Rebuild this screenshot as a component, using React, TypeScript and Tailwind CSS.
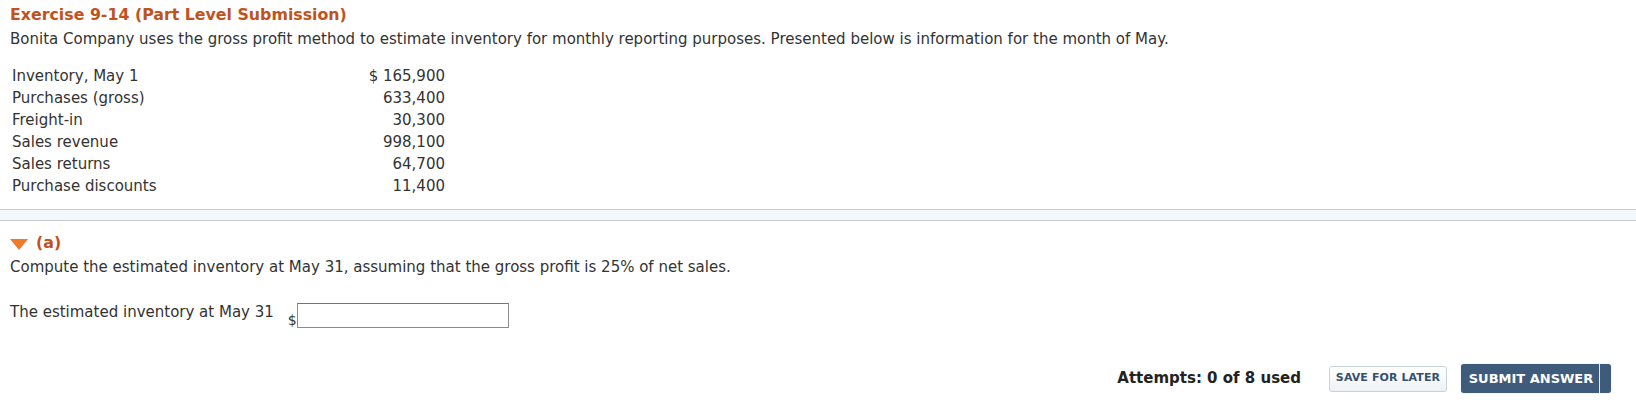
import React from "react";

const rows: [string, string][] = [
  ["Inventory, May 1", "$ 165,900"],
  ["Purchases (gross)", "633,400"],
  ["Freight-in", "30,300"],
  ["Sales revenue", "998,100"],
  ["Sales returns", "64,700"],
  ["Purchase discounts", "11,400"],
];

export default function App() {
  return (
    <div
      className="w-[1636px] h-[417px] bg-white text-[#333333] text-[15px] overflow-hidden"
      style={{ fontFamily: '"DejaVu Sans", Verdana, sans-serif' }}
    >
      <div className="pl-[10px] pt-[5px]">
        <div className="text-[#c0531c] font-bold text-[15.8px] leading-[20px]">
          Exercise 9-14 (Part Level Submission)
        </div>
        <div className="mt-[4px] leading-[20px]">
          Bonita Company uses the gross profit method to estimate inventory for monthly reporting purposes. Presented below is information for the month of May.
        </div>
        <div className="mt-[16px] ml-[2px] w-[433px]">
          {rows.map(([l, v]) => (
            <div key={l} className="flex justify-between leading-[22px]">
              <span>{l}</span>
              <span>{v}</span>
            </div>
          ))}
        </div>
      </div>
      <div className="mt-[12px] h-[12px] border-t border-b border-[#c6ced3] bg-[#f4f8fb]" />
      <div className="pl-[10px] pt-[12px]">
        <div className="flex items-center gap-[8px] leading-[20px]">
          <svg width="18" height="12" viewBox="0 0 18 12" className="mt-[2px]">
            <polygon points="0,1 18,1 9,12" fill="#f07a2a" />
          </svg>
          <span className="text-[#c0531c] font-bold text-[15.8px]">(a)</span>
        </div>
        <div className="mt-[4px] leading-[20px]">
          Compute the estimated inventory at May 31, assuming that the gross profit is 25% of net sales.
        </div>
        <div className="mt-[26px] flex items-start">
          <span className="leading-[20px] mt-[-1px]">The estimated inventory at May 31</span>
          <span className="ml-[14px] mt-[9px] leading-[16px] text-[14px]">$</span>
          <div className="w-[212px] h-[25px] border border-[#8c8c8c] border-t-[#767676] bg-white" />
        </div>
      </div>
      <div className="flex justify-end items-center pr-[25px] mt-[36px]">
        <span className="font-bold text-[15px] text-[#222] mr-[28px]">Attempts: 0 of 8 used</span>
        <button className="h-[26px] w-[118px] border border-[#c9d3dc] rounded-[3px] bg-gradient-to-b from-white to-[#eef2f6] text-[#35506e] font-bold text-[11px] tracking-[0.1px] mr-[14px]">
          SAVE FOR LATER
        </button>
        <button className="relative h-[29px] w-[150px] rounded-[3px] bg-[#3e5b7b] text-white font-bold text-[13px] shadow-[0_0_1px_#8fa3b8] pr-[10px] text-center">
          SUBMIT ANSWER
          <span className="absolute right-[11px] top-0 bottom-0 w-px bg-[#e6ecf2]" />
        </button>
      </div>
    </div>
  );
}
